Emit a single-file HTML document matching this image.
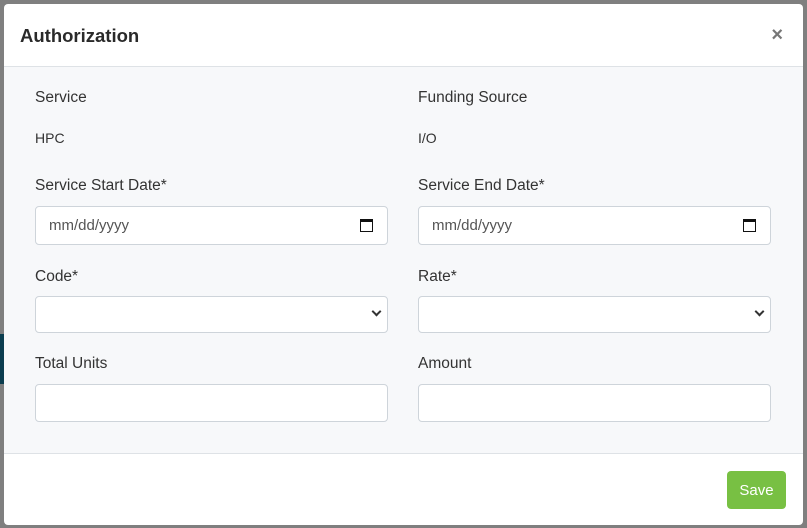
<!DOCTYPE html>
<html><head><meta charset="utf-8"><style>
*{box-sizing:border-box;margin:0;padding:0}
body{width:807px;height:528px;background:#7f7f7f;position:relative;overflow:hidden;font-family:"Segoe UI","Liberation Sans",sans-serif;color:#212529}
.teal{position:absolute;left:0;top:334px;width:4px;height:50px;background:#0b3d4f}
.modal{position:absolute;left:4px;top:4px;width:799px;height:521px;background:#fff;border-radius:4px;overflow:hidden}
.hd{height:63px;border-bottom:1px solid #dee2e6;position:relative}
.hd h5{position:absolute;left:16px;top:21px;font-size:18.5px;font-weight:bold;color:#2a2a2a}
.x{position:absolute;right:20px;top:21px;font-size:20px;color:#777;font-weight:bold;line-height:20px}
.bd{position:absolute;top:63px;left:0;width:799px;height:387px;background:#f7f8fa;border-bottom:1px solid #dee2e6}
.l{position:absolute;font-size:15.5px;color:#333}
.v{position:absolute;font-size:14px;color:#333}
.in{position:absolute;width:353px;background:#fff;border:1px solid #ced4da;border-radius:4px;font-size:15px;color:#555}
.in span{position:absolute;left:13px;top:10px}
.cal{position:absolute;right:14px;top:12px;width:13px;height:13px;border:1.5px solid #111;border-top-width:3px}
.chev{position:absolute;right:7px;top:11px;width:7px;height:7px;border-right:2px solid #333;border-bottom:2px solid #333;transform:rotate(45deg)}
.save{position:absolute;left:723px;top:467px;width:59px;height:38px;background:#78c043;color:#fff;border-radius:4px;font-size:15px;text-align:center;line-height:40px}
</style></head><body>
<div class="teal"></div>
<div class="modal">
<div class="hd"><h5>Authorization</h5><div class="x">×</div></div>
<div class="bd">
<div class="l" style="left:31px;top:22px">Service</div>
<div class="l" style="left:414px;top:22px">Funding Source</div>
<div class="v" style="left:31px;top:63px">HPC</div>
<div class="v" style="left:414px;top:63px">I/O</div>
<div class="l" style="left:31px;top:110px">Service Start Date*</div>
<div class="l" style="left:414px;top:110px">Service End Date*</div>
<div class="in" style="left:31px;top:139px;height:39px"><span>mm/dd/yyyy</span><div class="cal"></div></div>
<div class="in" style="left:414px;top:139px;height:39px"><span>mm/dd/yyyy</span><div class="cal"></div></div>
<div class="l" style="left:31px;top:201px">Code*</div>
<div class="l" style="left:414px;top:201px">Rate*</div>
<div class="in" style="left:31px;top:229px;height:37px"><div class="chev"></div></div>
<div class="in" style="left:414px;top:229px;height:37px"><div class="chev"></div></div>
<div class="l" style="left:31px;top:288px">Total Units</div>
<div class="l" style="left:414px;top:288px">Amount</div>
<div class="in" style="left:31px;top:317px;height:38px"></div>
<div class="in" style="left:414px;top:317px;height:38px"></div>
</div>
<div class="save">Save</div>
</div>
</body></html>
